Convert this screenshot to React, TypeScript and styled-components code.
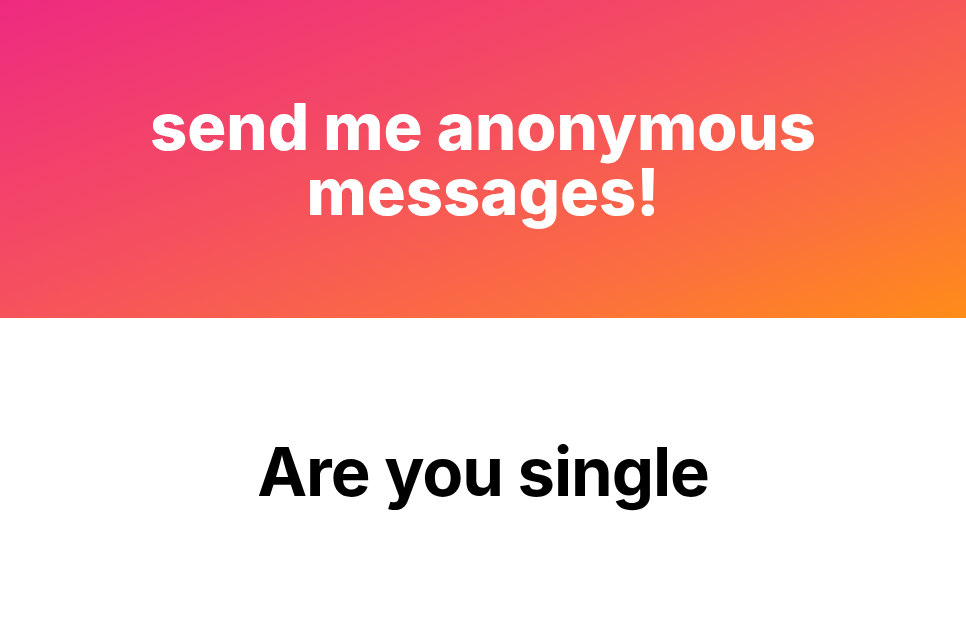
import React from 'react'
import styled, { createGlobalStyle } from 'styled-components'

const GlobalStyle = createGlobalStyle`
  html, body {
    margin: 0;
    padding: 0;
    background: #ffffff;
  }
  body {
    font-family: Inter, "Noto Sans", "Liberation Sans", sans-serif;
  }
`

const Page = styled.div`
  width: 966px;
  height: 636px;
  display: flex;
  flex-direction: column;
  overflow: hidden;
`

const Banner = styled.header`
  height: 318px;
  display: flex;
  align-items: center;
  justify-content: center;
  background: linear-gradient(160deg, #ee2a80 0%, #f5505e 45%, #fb6e40 75%, #ff8c18 100%);
`

const Headline = styled.h1`
  margin: 0;
  color: #ffffff;
  font-size: 65px;
  line-height: 65px;
  font-weight: 800;
  letter-spacing: 0;
  text-align: center;
`

const Line = styled.span`
  display: block;
`

const QuestionArea = styled.main`
  flex: 1;
  display: flex;
  align-items: center;
  justify-content: center;
  padding-bottom: 12px;
`

const Question = styled.h2`
  margin: 0;
  color: #000000;
  font-size: 67px;
  font-weight: 700;
  letter-spacing: -1.1px;
  text-align: center;
`

export default function App() {
  return (
    <Page>
      <GlobalStyle />
      <Banner>
        <Headline>
          <Line>send me anonymous</Line>
          <Line>messages!</Line>
        </Headline>
      </Banner>
      <QuestionArea>
        <Question>Are you single</Question>
      </QuestionArea>
    </Page>
  )
}
